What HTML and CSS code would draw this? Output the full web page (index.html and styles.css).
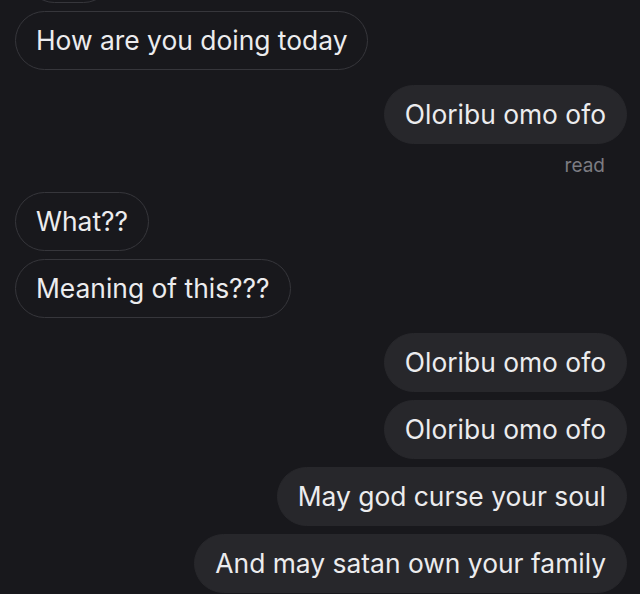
FILE: index.html
```html
<!DOCTYPE html>
<html lang="en">
<head>
    <meta charset="UTF-8">
    <title>Chat</title>
    <link rel="stylesheet" href="styles.css">
</head>
<body>
    <div class="thread">
        <div class="msg in stub"></div>
        <div class="msg in">How are you doing today</div>
        <div class="msg out spaced">Oloribu omo ofo</div>
        <div class="status">read</div>
        <div class="msg in">What??</div>
        <div class="msg in">Meaning of this???</div>
        <div class="msg out spaced">Oloribu omo ofo</div>
        <div class="msg out">Oloribu omo ofo</div>
        <div class="msg out">May god curse your soul</div>
        <div class="msg out">And may satan own your family</div>
    </div>
</body>
</html>
```

FILE: styles.css
```css
body {
    margin: 0;
    background-color: #18181c;
    font-family: 'Inter', 'Liberation Sans', sans-serif;
    color: #ececee;
    overflow: hidden;
}

.thread {
    display: flex;
    flex-direction: column;
    gap: 8px;
    padding: 0 13px 0 15px;
}

.msg {
    box-sizing: border-box;
    height: 59px;
    padding: 0 20px;
    border-radius: 30px;
    font-size: 26.4px;
    line-height: 57px;
    white-space: nowrap;
}

.msg.in {
    align-self: flex-start;
    border: 1px solid #36363b;
}

.msg.out {
    align-self: flex-end;
    background-color: #27272b;
    border: 1px solid #27272b;
}

.msg.stub {
    width: 88px;
    margin-top: -56px;
    margin-left: 10px;
}

.msg.spaced {
    margin-top: 7px;
}

.status {
    align-self: flex-end;
    margin: 2px 22px 7px 0;
    font-size: 19px;
    color: #7c7c82;
}
```
